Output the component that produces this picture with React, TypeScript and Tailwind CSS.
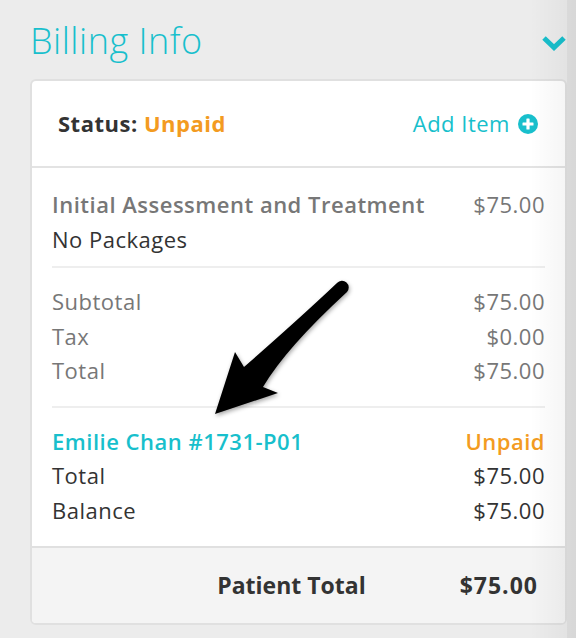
import React from "react";

const rowClass = "flex justify-between leading-[34.5px]";

function Chevron() {
  return (
    <svg width="26" height="16" viewBox="0 0 26 16" className="mt-[4px]">
      <path d="M3 3 L13 12.5 L23 3" fill="none" stroke="#18bfcc" strokeWidth="5" />
    </svg>
  );
}

function PlusCircle() {
  return (
    <svg width="20" height="20" viewBox="0 0 20 20">
      <circle cx="10" cy="10" r="10" fill="#18bfcc" />
      <rect x="8.4" y="4.5" width="3.2" height="11" rx="0.6" fill="#fff" />
      <rect x="4.5" y="8.4" width="11" height="3.2" rx="0.6" fill="#fff" />
    </svg>
  );
}

function Arrow() {
  // annotation arrow drawn over the screenshot
  return (
    <svg
      className="absolute inset-0 pointer-events-none drop-shadow-[1px_2px_2px_rgba(0,0,0,0.35)]"
      width="576"
      height="638"
      viewBox="0 0 576 638"
    >
      <path
        d="M337 283 Q300 318 244 367 L235 352 L215 414 L278 393 L263 387 Q286 348 347 292 A5.5 5.5 0 0 0 337 283 Z"
        fill="#000"
      />
    </svg>
  );
}

export default function App() {
  return (
    <div className="relative h-[638px] w-[576px] overflow-hidden bg-[#ececec] pl-[30px] pr-[9px] font-['Open_Sans',sans-serif] tracking-[0.5px]">
      <div className="flex items-center justify-between pt-[19px] pb-[16px]">
        <h2 className="text-[36px] font-light leading-[44px] text-[#18bfcc]">Billing Info</h2>
        <Chevron />
      </div>

      <div className="overflow-hidden rounded-[6px] border-2 border-[#e0e0e0] bg-white text-[22px]">
        <div className="flex h-[87px] items-center justify-between border-b-2 border-[#e3e3e3] pl-[26px] pr-[27px]">
          <div className="font-bold text-[#333]">
            Status: <span className="text-[#f39b21]">Unpaid</span>
          </div>
          <div className="flex items-center gap-[8px] text-[#18bfcc]">
            Add Item
            <PlusCircle />
          </div>
        </div>

        <div className="px-[20px]">
          <div className="border-b-2 border-[#eeeeee] pt-[19px] pb-[10px]">
            <div className={rowClass}>
              <span className="font-semibold text-[#777]">Initial Assessment and Treatment</span>
              <span className="text-[#777]">$75.00</span>
            </div>
            <div className={rowClass}>
              <span className="text-[#333]">No Packages</span>
            </div>
          </div>

          <div className="border-b-2 border-[#eeeeee] pt-[16px] pb-[18px] text-[#777]">
            <div className={rowClass}>
              <span>Subtotal</span>
              <span>$75.00</span>
            </div>
            <div className={rowClass}>
              <span>Tax</span>
              <span>$0.00</span>
            </div>
            <div className={rowClass}>
              <span>Total</span>
              <span>$75.00</span>
            </div>
          </div>

          <div className="pt-[16px] pb-[19px] text-[#333]">
            <div className={rowClass}>
              <span className="font-semibold text-[#18bfcc]">Emilie Chan #1731-P01</span>
              <span className="font-semibold text-[#f39b21]">Unpaid</span>
            </div>
            <div className={rowClass}>
              <span>Total</span>
              <span>$75.00</span>
            </div>
            <div className={rowClass}>
              <span>Balance</span>
              <span>$75.00</span>
            </div>
          </div>
        </div>

        <div className="flex h-[77px] items-center justify-end gap-[94px] border-t-2 border-[#e0e0e0] bg-[#f4f4f4] px-[27px] text-[23px] font-bold tracking-normal text-[#333]">
          <span>Patient Total</span>
          <span className="tracking-[1px]">$75.00</span>
        </div>
      </div>

      <div className="pointer-events-none absolute top-0 right-0 bottom-0 w-[46px] bg-gradient-to-r from-transparent to-black/[0.05]" />
      <div className="pointer-events-none absolute top-0 right-0 bottom-0 w-[9px] bg-black/[0.04]" />
      <Arrow />
    </div>
  );
}
